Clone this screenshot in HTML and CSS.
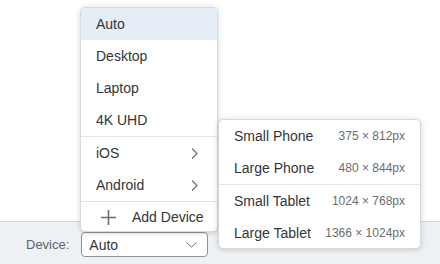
FILE: index.html
```html
<!DOCTYPE html>
<html>
<head>
<meta charset="utf-8">
<link rel="stylesheet" href="styles.css">
</head>
<body>
<div class="page">
  <div class="content"></div>
  <div class="toolbar">
    <span class="label">Device:</span>
    <div class="select">
      <span>Auto</span>
      <svg class="down" width="11" height="6" viewBox="0 0 11 6"><path d="M0.5 0.5 L5.5 5 L10.5 0.5" fill="none" stroke="#5b738b" stroke-width="1"/></svg>
    </div>
  </div>

  <div class="menu main">
    <div class="item active">Auto</div>
    <div class="item">Desktop</div>
    <div class="item">Laptop</div>
    <div class="item">4K UHD</div>
    <div class="sep"></div>
    <div class="item sub"><span>iOS</span><svg width="7" height="11" viewBox="0 0 7 11"><path d="M1 0.5 L6 5.5 L1 10.5" fill="none" stroke="#6a6d70" stroke-width="1.1"/></svg></div>
    <div class="item sub"><span>Android</span><svg width="7" height="11" viewBox="0 0 7 11"><path d="M1 0.5 L6 5.5 L1 10.5" fill="none" stroke="#6a6d70" stroke-width="1.1"/></svg></div>
    <div class="sep"></div>
    <div class="item add"><svg width="15" height="15" viewBox="0 0 15 15"><path d="M7.5 0 V15 M0 7.5 H15" stroke="#6a6d70" stroke-width="1.6"/></svg><span>Add Device</span></div>
  </div>

  <div class="menu submenu">
    <div class="item dev"><span>Small Phone</span><span class="dim">375 × 812px</span></div>
    <div class="item dev"><span>Large Phone</span><span class="dim">480 × 844px</span></div>
    <div class="sep"></div>
    <div class="item dev"><span>Small Tablet</span><span class="dim">1024 × 768px</span></div>
    <div class="item dev"><span>Large Tablet</span><span class="dim">1366 × 1024px</span></div>
  </div>
</div>
</body>
</html>
```

FILE: styles.css
```css
html, body {
  margin: 0;
  padding: 0;
}
body {
  font-family: "Liberation Sans", Arial, sans-serif;
  color: #32363a;
  font-size: 14px;
}
.page {
  position: relative;
  width: 440px;
  height: 264px;
  display: flex;
  flex-direction: column;
  overflow: hidden;
}
.content {
  flex: 0 0 221px;
  background: #fff;
}
.toolbar {
  flex: 1;
  background: #eef1f4;
  border-top: 1px solid #d5d8dc;
  display: flex;
  align-items: center;
  padding-left: 26px;
  gap: 12px;
  padding-top: 3px;
  box-sizing: border-box;
}
.label {
  color: #5b6470;
  font-size: 13px;
}
.select {
  width: 127px;
  height: 25px;
  box-sizing: border-box;
  border: 1px solid #8c939b;
  border-radius: 4px;
  background: #fff;
  display: flex;
  align-items: center;
  justify-content: space-between;
  padding: 0 10px 0 7px;
  font-size: 14px;
  color: #32363a;
}
.menu {
  position: absolute;
  background: #fff;
  border: 1px solid #d9d9d9;
  border-radius: 5px;
  box-shadow: 0 0 6px rgba(0,0,0,0.12), 0 2px 4px rgba(0,0,0,0.06);
  box-sizing: border-box;
  overflow: hidden;
}
.main {
  left: 80px;
  top: 7px;
  width: 138px;
  height: 225px;
}
.item {
  height: 32px;
  display: flex;
  align-items: center;
  padding-left: 15px;
  padding-right: 16px;
  white-space: nowrap;
}
.item.active {
  background: #e5edf6;
}
.sep {
  height: 1px;
  background: #e1e3e5;
}
.item.sub {
  justify-content: space-between;
  padding-right: 19px;
}
.item.add {
  height: 30px;
  padding-left: 20px;
  padding-right: 0;
  gap: 16px;
}
.submenu {
  left: 218px;
  top: 119px;
  width: 203px;
  height: 130px;
}
.item.dev {
  justify-content: space-between;
  padding-left: 15px;
  padding-right: 15px;
}
.dim {
  font-size: 12px;
  color: #6a6d70;
}
```
